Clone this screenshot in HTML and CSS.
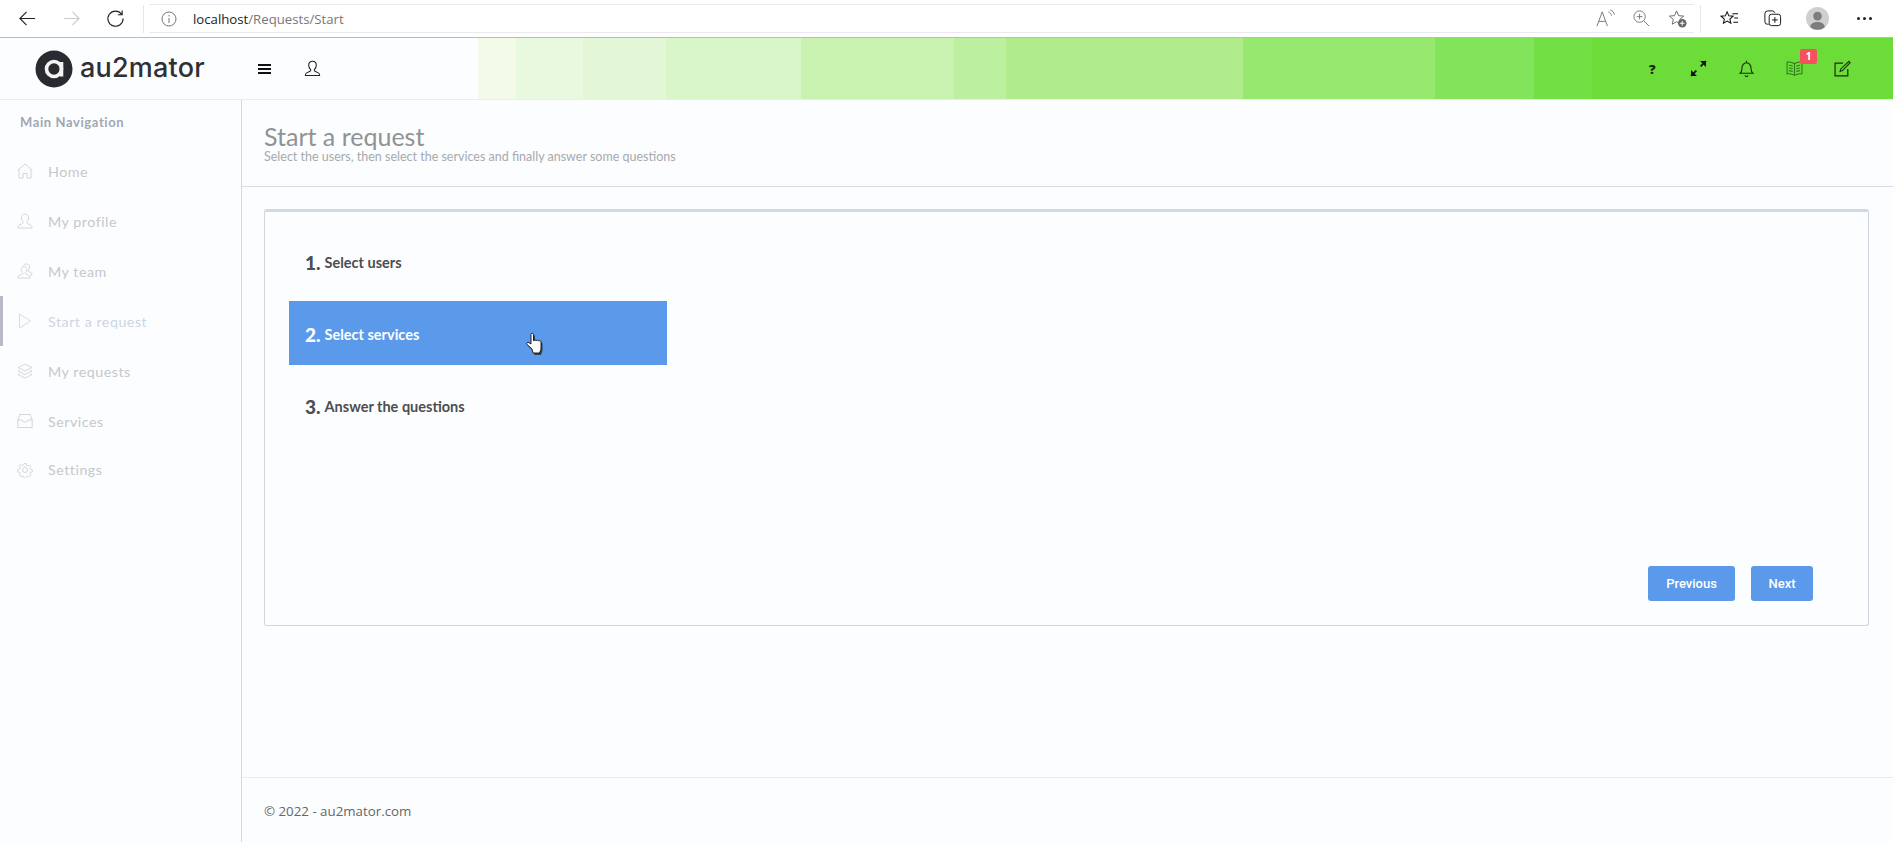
FILE: index.html
```html
<!DOCTYPE html>
<html>
<head>
    <title>au2mator - Start a request</title>
    <link rel="stylesheet" href="styles.css">
</head>
<body>
    <!-- browser chrome -->
    <div class="browser-bar">
        <div class="nav-buttons">
            <svg class="chrome-icon" viewBox="0 0 20 20"><path d="M18 10H2M9 3l-7 7 7 7" fill="none" stroke="#222" stroke-width="1.2"/></svg>
            <svg class="chrome-icon" viewBox="0 0 20 20"><path d="M2 10h16M11 3l7 7-7 7" fill="none" stroke="#ccc" stroke-width="1.2"/></svg>
            <svg class="chrome-icon" viewBox="0 0 20 20"><path d="M16.5 5.5A8 8 0 1 0 18 10M17 1.5v4.5h-4.500" fill="none" stroke="#222" stroke-width="1.200"/></svg>
        </div>
        <div class="address">
            <svg class="info-icon" viewBox="0 0 16 16"><circle cx="8" cy="8" r="7" fill="none" stroke="#777"/><path d="M8 7v5M8 4v1.500" stroke="#777"/></svg>
            <span class="url"><span class="host">localhost</span>/Requests/Start</span>
            <div class="address-tools">
                <svg class="tool-icon" viewBox="0 0 20 20"><path d="M1 18L6.500 3 12 18M3 13h7M13 3c2 .6 3 2 3.300 4M15 1c2.500.8 4 2.600 4.300 5" fill="none" stroke="#777" stroke-width="1"/></svg>
                <svg class="tool-icon" viewBox="0 0 20 20"><circle cx="8" cy="8" r="6" fill="none" stroke="#777"/><path d="M8 5v6M5 8h6M12.500 12.500L18 18" stroke="#777" fill="none"/></svg>
                <svg class="tool-icon" viewBox="0 0 20 20"><path d="M9 2l2.200 5 5.300.5-4 3.500 1 5L9 13.400 4.500 16l1-5-4-3.500L6.800 7z" fill="none" stroke="#666"/><circle cx="15" cy="15" r="4.500" fill="#666"/><path d="M15 12.500v5M12.500 15h5" stroke="#fff"/></svg>
            </div>
        </div>
        <div class="browser-tools">
            <svg class="tool-icon" viewBox="0 0 20 20"><path d="M7.500 3l1.800 4.200 4.500.4-3.400 3 1 4.400-3.900-2.300L3.600 15l1-4.400-3.400-3 4.500-.4zM13 5h6M15 9.500h4M14 14h5" fill="none" stroke="#111" stroke-width="1.100"/></svg>
            <svg class="tool-icon" viewBox="0 0 20 20"><path d="M6 16H4.500A2.500 2.500 0 0 1 2 13.500V5a3 3 0 0 1 3-3h5a3 3 0 0 1 2.500 2" fill="none" stroke="#111"/><rect x="6.500" y="5.500" width="12" height="12" rx="2.500" fill="#fff" stroke="#111"/><path d="M12.500 8.500v6M9.500 11.500h6" stroke="#111"/></svg>
            <svg class="avatar" viewBox="0 0 24 24"><circle cx="12" cy="12" r="12" fill="#cfcfcf"/><circle cx="12" cy="9.500" r="4.500" fill="#7d7d7d"/><path d="M4.500 21c0-7 15-7 15 0a12 12 0 0 1-15 0z" fill="#7d7d7d"/></svg>
            <span class="dots"><i></i><i></i><i></i></span>
        </div>
    </div>

    <!-- app header -->
    <header class="app-header">
        <div class="brand">
            <svg class="brand-mark" viewBox="0 0 38 38"><circle cx="19" cy="19" r="18.500" fill="#2a2b30"/><circle cx="19" cy="19" r="7.500" fill="none" stroke="#f4f4f4" stroke-width="3.600"/><path d="M26.500 12v14.500" stroke="#f4f4f4" stroke-width="3.600"/></svg>
            <span class="brand-name">au2mator</span>
        </div>
        <div class="header-left">
            <span class="hamburger"><i></i><i></i><i></i></span>
            <svg class="head-icon" viewBox="0 0 16 16"><path d="M8 1.200c-2.300 0-3.600 1.700-3.600 3.800 0 1.700.8 3 1.800 4 .4.800-.1 1.500-1 1.900l-2.700 1.200c-1 .5-1.200 1.100-1.200 2.400h13.400c0-1.300-.2-1.900-1.200-2.400l-2.700-1.200c-.9-.4-1.400-1.100-1-1.900 1-1 1.800-2.300 1.800-4 0-2.100-1.300-3.800-3.600-3.800z" fill="none" stroke="#222"/></svg>
        </div>
        <div class="header-right">
            <span class="help">?</span>
            <svg class="head-icon" viewBox="0 0 16 16"><path d="M1 15l5-5M15 1l-5 5" stroke="#111" stroke-width="1.600"/><path d="M1 15V9.500L6.500 15zM15 1v5.500L9.500 1z" fill="#111"/></svg>
            <svg class="head-icon" viewBox="0 0 16 16"><path d="M2 12.500c1.200-1 1.700-2 1.700-4.500 0-3 1.800-5.500 4.300-5.500s4.300 2.500 4.300 5.500c0 2.500.5 3.500 1.700 4.500zM8 .8v1.700M6.500 14.500a1.600 1.600 0 0 0 3 0" fill="none" stroke="#1c2a12"/></svg>
            <span class="book">
                <svg class="head-icon" viewBox="0 0 16 16"><path d="M8 3.500C6 2 3.500 1.700 1 2v11c2.500-.3 5 0 7 1.500 2-1.500 4.500-1.800 7-1.500V2c-2.500-.3-5 0-7 1.500zM8 3.500v11M2.800 5c1.200 0 2.400.3 3.500.8M2.800 7.500c1.200 0 2.400.3 3.500.8M2.800 10c1.200 0 2.400.3 3.500.8M13.200 5c-1.200 0-2.400.3-3.500.8M13.200 7.500c-1.200 0-2.400.3-3.500.8M13.200 10c-1.200 0-2.400.3-3.500.8" fill="none" stroke="#2f7a1c"/></svg>
                <span class="badge">1</span>
            </span>
            <svg class="head-icon" viewBox="0 0 16 16"><path d="M13 8.500V15H1V3h7.500" fill="none" stroke="#1c2a12" stroke-width="1.100"/><path d="M14 1.200L15.200 2.500 8 10l-2.300.8.700-2.400z" fill="none" stroke="#1c2a12"/></svg>
        </div>
    </header>

    <div class="layout">
        <nav class="sidebar">
            <div class="nav-title">Main Navigation</div>
            <a class="nav-item">
                <svg viewBox="0 0 16 16"><path d="M.5 7.500L8 1l7.500 6.500M2 6.500V15h4v-4.500h4V15h4V6.500" /></svg>
                Home
            </a>
            <a class="nav-item">
                <svg viewBox="0 0 16 16"><path d="M8 1c-2.300 0-3.600 1.700-3.600 3.800 0 1.700.8 3 1.800 4 .4.800-.1 1.500-1 1.900l-2.700 1.200C1.500 12.400 1 13 1 15h14c0-2-.5-2.600-1.500-3.100l-2.700-1.200c-.9-.4-1.400-1.100-1-1.900 1-1 1.800-2.300 1.800-4C11.600 2.700 10.300 1 8 1z"/></svg>
                My profile
            </a>
            <a class="nav-item">
                <svg viewBox="0 0 16 16"><path d="M7 3.500c-1.800 0-2.900 1.400-2.900 3.100 0 1.400.6 2.400 1.500 3.200.3.700-.1 1.200-.8 1.500l-2.300 1C1.500 12.700 1 13.300 1 15h12c0-1.700-.5-2.300-1.500-2.700l-2.300-1c-.7-.3-1.100-.8-.8-1.500.9-.8 1.500-1.800 1.500-3.200C9.900 4.900 8.800 3.500 7 3.500zM6.500 2.500C7.200 1.500 8.200 1 9.500 1c1.800 0 3 1.300 3 3.100 0 1.300-.6 2.400-1.500 3.100-.3.600 0 1 .7 1.400l2 .9c1 .5 1.300 1 1.300 2.500h-2"/></svg>
                My team
            </a>
            <a class="nav-item active">
                <svg viewBox="0 0 16 16"><path d="M2.500 1v14l11-7z"/></svg>
                Start a request
            </a>
            <a class="nav-item">
                <svg viewBox="0 0 16 16"><path d="M8 1l7 3.500L8 8 1 4.500zM2.500 7L1 8l7 3.500L15 8l-1.500-1M2.500 10.500L1 11.500 8 15l7-3.500-1.500-1"/></svg>
                My requests
            </a>
            <a class="nav-item">
                <svg viewBox="0 0 16 16"><path d="M.8 7V14.500h14.400V7M.8 7l2-5.500h10.400l2 5.500M.8 7h4.200l1.500 2h3l1.500-2h4.200"/></svg>
                Services
            </a>
            <a class="nav-item last">
                <svg viewBox="0 0 16 16"><circle cx="8" cy="8" r="2.500"/><path d="M6.800 1h2.400l.4 2 1.300.6 1.800-1 1.600 1.700-1.100 1.700.6 1.300 2 .4v2.400l-2 .4-.6 1.300 1.100 1.700-1.600 1.700-1.800-1-1.300.6-.4 2H6.800l-.4-2-1.300-.6-1.800 1-1.600-1.700 1.100-1.700-.6-1.300-2-.4V7.300l2-.4.600-1.300L1.700 3.900l1.600-1.700 1.800 1 1.300-.6z" transform="translate(.6 .6) scale(.93)"/></svg>
                Settings
            </a>
        </nav>

        <main class="main">
            <div class="page-head">
                <h1>Start a request</h1>
                <p>Select the users, then select the services and finally answer some questions</p>
            </div>
            <div class="content">
                <section class="card">
                    <ul class="steps">
                        <li class="step"><b>1.</b> Select users</li>
                        <li class="step current">
                            <b>2.</b> Select services
                            <svg class="cursor" viewBox="0 0 22 24"><path d="M8 17l-5-4.500c-1-1.500.8-2.800 2-1.800L7 12V2.500C7 .8 9.500.8 9.500 2.500V9c.3-1.300 2.500-1.300 2.700 0 .3-1.200 2.400-1.200 2.600.2.400-1 2.200-.8 2.200.6V16c0 2-1 3.500-1.500 5H9z" fill="#33415c" transform="translate(1.500 2)"/><path d="M8 17l-5-4.500c-1-1.500.8-2.800 2-1.800L7 12V2.500C7 .8 9.500.8 9.500 2.500V9c.3-1.300 2.500-1.300 2.700 0 .3-1.200 2.400-1.200 2.600.2.400-1 2.200-.8 2.200.6V16c0 2-1 3.500-1.500 5H9z" fill="#fff" stroke="#111" stroke-width=".9"/></svg>
                        </li>
                        <li class="step"><b>3.</b> Answer the questions</li>
                    </ul>
                    <div class="actions">
                        <button class="btn-prev">Previous</button>
                        <button class="btn-next">Next</button>
                    </div>
                </section>
            </div>
            <footer class="footer">© 2022 - au2mator.com</footer>
        </main>
    </div>
</body>
</html>
```

FILE: styles.css
```css
html, body {
    margin: 0;
    height: 100%;
}
body {
    display: flex;
    flex-direction: column;
    height: 842px;
    overflow: hidden;
    background-color: #fcfdff;
    font-family: "Open Sans", "Noto Sans", sans-serif;
}

/* browser chrome */
.browser-bar {
    display: flex;
    align-items: center;
    height: 37px;
    border-bottom: 1px solid #bbb;
    background-color: #fff;
    flex-shrink: 0;
}
.nav-buttons {
    display: flex;
    gap: 25px;
    padding-left: 18px;
    width: 125px;
    height: 28px;
    align-items: center;
    border-right: 1px solid #e6e6e6;
}
.chrome-icon {
    width: 19px;
    height: 19px;
}
.address {
    display: flex;
    align-items: center;
    width: 1545px;
    height: 29px;
    margin-left: 5px;
    border-top: 1px solid #e9e9ee;
    border-bottom: 1px solid #e9e9ee;
    box-sizing: border-box;
}
.info-icon {
    width: 16px;
    height: 16px;
    margin-left: 12px;
}
.url {
    margin-left: 16px;
    font-size: 13.200px;
    color: #777;
}
.host {
    color: #222;
}
.address-tools {
    display: flex;
    gap: 17px;
    margin-left: auto;
    margin-right: 7px;
}
.tool-icon {
    width: 19px;
    height: 19px;
}
.browser-tools {
    display: flex;
    align-items: center;
    margin-left: 6px;
    padding-left: 19px;
    gap: 24px;
    height: 28px;
    border-left: 1px solid #e6e6e6;
}
.avatar {
    width: 23px;
    height: 23px;
}
.dots {
    display: flex;
    gap: 3px;
    margin-left: 4px;
}
.dots i {
    width: 3px;
    height: 3px;
    border-radius: 50%;
    background-color: #222;
}

/* app header */
.app-header {
    display: flex;
    align-items: center;
    height: 61px;
    flex-shrink: 0;
    border-bottom: 1px solid #ebecef;
    background-image: linear-gradient(to right,
        #fcfdff 0, #fcfdff 478px,
        #f3fbe8 478px, #f3fbe8 516px,
        #e9f9e0 516px, #e9f9e0 583px,
        #e3f7d6 583px, #e3f7d6 666px,
        #d8f6c8 666px, #d8f6c8 801px,
        #c9f2b0 801px, #c9f2b0 954px,
        #bdefa0 954px, #bdefa0 1006px,
        #b0ec8c 1006px, #b0ec8c 1243px,
        #96e86e 1243px, #96e86e 1435px,
        #82e45a 1435px, #82e45a 1534px,
        #72e044 1534px, #72e044 1592px,
        #6bdc38 1592px, #6bdc38 100%);
}
.brand {
    display: flex;
    align-items: center;
    width: 240px;
    padding-left: 35px;
    box-sizing: border-box;
}
.brand-mark {
    width: 38px;
    height: 38px;
}
.brand-name {
    margin-left: 7px;
    margin-top: -2px;
    font-family: "Inter", sans-serif;
    font-size: 27px;
    font-weight: 500;
    letter-spacing: 0.2px;
    color: #2f3035;
}
.header-left {
    display: flex;
    align-items: center;
    gap: 33px;
    margin-left: 18px;
}
.hamburger {
    display: flex;
    flex-direction: column;
    gap: 2px;
    width: 13px;
}
.hamburger i {
    height: 2px;
    background-color: #111;
}
.head-icon {
    width: 17px;
    height: 17px;
    display: block;
}
.header-right {
    display: flex;
    align-items: center;
    gap: 31px;
    margin-left: auto;
    margin-right: 42px;
}
.help {
    font-size: 13px;
    font-weight: 800;
    color: #1b2414;
    width: 8px;
    margin-right: 2px;
}
.book {
    position: relative;
}
.badge {
    position: absolute;
    left: 14px;
    top: -11px;
    width: 17px;
    height: 15px;
    line-height: 15px;
    border-radius: 2px;
    background-color: #f5515f;
    color: #fff;
    font-size: 10px;
    font-weight: 700;
    text-align: center;
}

/* page layout */
.layout {
    display: flex;
    flex: 1;
    min-height: 0;
}
.sidebar {
    width: 241px;
    flex-shrink: 0;
    border-right: 1px solid #d9d9dd;
    padding-top: 12px;
}
.nav-title {
    padding-left: 20px;
    height: 20px;
    line-height: 20px;
    margin-bottom: 14px;
    font-family: "Lato", sans-serif;
    font-size: 13px;
    font-weight: 700;
    letter-spacing: 0.6px;
    color: #a0a8b2;
}
.nav-item {
    display: flex;
    align-items: center;
    height: 50px;
    padding-left: 17px;
    font-family: "Lato", sans-serif;
    font-size: 14.300px;
    letter-spacing: 0.5px;
    color: #c6c8cc;
    box-sizing: border-box;
}
.nav-item.last {
    height: 47px;
}
.nav-item svg {
    width: 16px;
    height: 16px;
    margin-right: 15px;
    fill: none;
    stroke: #c9cbcf;
    stroke-width: 0.8;
}
.nav-item.active {
    padding-left: 14px;
    border-left: 3px solid #b8b8c6;
    color: #cdd6e2;
}
.nav-item.active svg {
    stroke: #c9d3e2;
}
.main {
    flex: 1;
    display: flex;
    flex-direction: column;
    min-width: 0;
}
.page-head {
    height: 87px;
    padding: 23px 0 0 22px;
    box-sizing: border-box;
    border-bottom: 1px solid #d6dde4;
}
.page-head h1 {
    margin: 0;
    font-family: "Lato", sans-serif;
    font-size: 25px;
    line-height: 27px;
    font-weight: 400;
    color: #8f9394;
}
.page-head p {
    margin: 1px 0 0;
    font-family: "Lato", sans-serif;
    font-size: 12.500px;
    line-height: 12px;
    color: #a6aaad;
}
.content {
    flex: 1;
    padding: 22px 24px 0 22px;
}
.card {
    height: 417px;
    box-sizing: border-box;
    border: 1px solid #cfd8e0;
    border-top: 3px solid #d0dae3;
    border-radius: 3px;
    padding: 17px 24px 0 24px;
    display: flex;
    flex-direction: column;
}
.steps {
    list-style: none;
    margin: 0;
    padding: 0;
    width: 378px;
    display: flex;
    flex-direction: column;
    gap: 8px;
}
.step {
    position: relative;
    display: flex;
    align-items: center;
    gap: 4px;
    height: 64px;
    padding-left: 16px;
    padding-top: 2px;
    box-sizing: border-box;
    font-family: "Lato", sans-serif;
    font-size: 14.500px;
    font-weight: 700;
    color: #4c4e50;
}
.step b {
    font-size: 19px;
}
.step.current {
    background-color: #5b9aea;
    color: #fbfdff;
}
.cursor {
    position: absolute;
    left: 235px;
    top: 31px;
    width: 22px;
    height: 24px;
}
.actions {
    display: flex;
    justify-content: flex-end;
    gap: 16px;
    margin-top: auto;
    margin-bottom: 24px;
    padding-right: 31px;
}
button {
    height: 35px;
    border: none;
    border-radius: 3px;
    background-color: #5b9aea;
    color: #fff;
    font-family: "Roboto", sans-serif;
    font-size: 13px;
    font-weight: 500;
}
.btn-prev {
    width: 87px;
    padding: 0;
}
.btn-next {
    width: 62px;
    padding: 0;
}
.footer {
    height: 65px;
    flex-shrink: 0;
    display: flex;
    align-items: center;
    padding-left: 22px;
    padding-top: 2px;
    box-sizing: border-box;
    border-top: 1px solid #e8eaed;
    font-size: 13.300px;
    color: #666;
}
```
